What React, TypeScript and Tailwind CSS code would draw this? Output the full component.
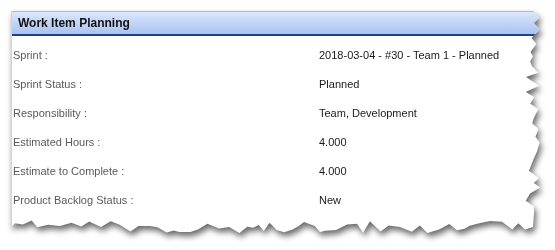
import React from 'react';

const rows: [string, string][] = [
  ['Sprint :', '2018-03-04 - #30 - Team 1 - Planned'],
  ['Sprint Status :', 'Planned'],
  ['Responsibility :', 'Team, Development'],
  ['Estimated Hours :', '4.000'],
  ['Estimate to Complete :', '4.000'],
  ['Product Backlog Status :', 'New'],
];

// torn paper outline, seeded so the edge is the same every render
function tornPolygon(w: number, h: number): string {
  let seed = 7;
  const rnd = () => {
    seed = (seed * 9301 + 49297) % 233280;
    return seed / 233280;
  };
  const pts: string[] = ['0px 0px'];
  let y = 0;
  while (y < h - 16) {
    const x = w - 6 - rnd() * 16;
    pts.push(`${x.toFixed(1)}px ${y.toFixed(1)}px`);
    y += 4 + rnd() * 5;
  }
  let x = w - 14;
  while (x > 0) {
    const yy = h - 2 - rnd() * 13;
    pts.push(`${x.toFixed(1)}px ${yy.toFixed(1)}px`);
    x -= 5 + rnd() * 7;
  }
  pts.push(`0px ${h - 8}px`);
  return `polygon(${pts.join(', ')})`;
}

export default function App() {
  const clip = tornPolygon(536, 224);
  return (
    <div className="w-[555px] h-[250px] bg-white pl-[11px] pt-[11px] font-['Liberation_Sans',Arial,sans-serif]">
      <div className="w-[536px] h-[224px] [filter:drop-shadow(2px_4px_3px_rgba(0,0,0,0.6))]">
        <div className="w-full h-full bg-white border-l border-[#d4d4d4]" style={{ clipPath: clip }}>
          <div className="h-[25px] flex items-center pl-[6px] bg-gradient-to-b from-[#dbe7fc] to-[#a9c3ef] border-t border-[#a6bde2] border-b-2 border-b-[#203f86]">
            <span className="text-[12px] font-bold text-[#111]">Work Item Planning</span>
          </div>
          <div className="pt-[5px] pl-[1px] grid grid-cols-[306px_1fr] text-[11px]">
            {rows.map(([label, value]) => (
              <React.Fragment key={label}>
                <div className="h-[29px] flex items-center text-[#5a5a5a]">{label}</div>
                <div className="h-[29px] flex items-center text-[#1a1a1a]">{value}</div>
              </React.Fragment>
            ))}
          </div>
        </div>
      </div>
    </div>
  );
}
